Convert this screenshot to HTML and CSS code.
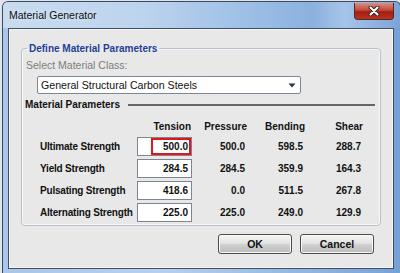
FILE: index.html
```html
<!DOCTYPE html>
<html lang="en">
<head>
    <meta charset="UTF-8">
    <title>Material Generator</title>
    <link rel="stylesheet" href="styles.css">
</head>
<body>
    <div class="window">
        <div class="titlebar">
            <span class="title">Material Generator</span>
            <span class="close">
                <svg width="12" height="10" viewBox="0 0 12 10">
                    <path d="M2.5 1.5 L9.5 8.5 M9.5 1.5 L2.5 8.5" stroke="#3a2a2a" stroke-width="4" stroke-linecap="round"/>
                    <path d="M2.5 1.5 L9.5 8.5 M9.5 1.5 L2.5 8.5" stroke="#ffffff" stroke-width="2" stroke-linecap="round"/>
                </svg>
            </span>
        </div>
        <div class="frame">
            <div class="client">
                <fieldset class="group">
                    <legend>Define Material Parameters</legend>
                    <div class="field-label">Select Material Class:</div>
                    <div class="combo">
                        <span>General Structural Carbon Steels</span>
                        <svg width="8" height="5" viewBox="0 0 8 5"><path d="M0.5 0.5 H7.5 L4 4.5 Z" fill="#333"/></svg>
                    </div>
                    <div class="section-head">
                        <span>Material Parameters</span>
                        <div class="rule"></div>
                    </div>
                    <div class="params">
                        <div></div>
                        <div class="head">Tension</div>
                        <div class="head">Pressure</div>
                        <div class="head">Bending</div>
                        <div class="head">Shear</div>

                        <div class="label">Ultimate Strength</div>
                        <div class="value"><div class="input"><span class="mark">500.0</span></div></div>
                        <div class="value num">500.0</div>
                        <div class="value num">598.5</div>
                        <div class="value num">288.7</div>

                        <div class="label">Yield Strength</div>
                        <div class="value"><div class="input">284.5</div></div>
                        <div class="value num">284.5</div>
                        <div class="value num">359.9</div>
                        <div class="value num">164.3</div>

                        <div class="label">Pulsating Strength</div>
                        <div class="value"><div class="input">418.6</div></div>
                        <div class="value num">0.0</div>
                        <div class="value num">511.5</div>
                        <div class="value num">267.8</div>

                        <div class="label">Alternating Strength</div>
                        <div class="value"><div class="input">225.0</div></div>
                        <div class="value num">225.0</div>
                        <div class="value num">249.0</div>
                        <div class="value num">129.9</div>
                    </div>
                </fieldset>
                <div class="buttons">
                    <button>OK</button>
                    <button>Cancel</button>
                </div>
            </div>
        </div>
    </div>
</body>
</html>
```

FILE: styles.css
```css
html, body {
    margin: 0;
    height: 100%;
    overflow: hidden;
}
body {
    background: #dde4ec;
    font-family: "Liberation Sans", Arial, sans-serif;
    color: #111;
}
.window {
    box-sizing: border-box;
    width: 399px;
    height: 273px;
    margin: 1px 0 0 2px;
    border: 1px solid #3b4a5c;
    border-bottom: none;
    border-radius: 6px 6px 0 0;
    background: linear-gradient(to right, #a9c6e8 0%, #b9d0ec 40%, #8fb2de 80%, #76a1d6 100%);
    overflow: hidden;
}
.titlebar {
    display: flex;
    align-items: flex-start;
    height: 26px;
    background: linear-gradient(to right, #c8dbf0 0%, #bdd4ee 35%, #9fc0e6 60%, #8cb1df 78%, #a6c4e8 86%, #7ba4d7 100%);
}
.title {
    margin: 7px 0 0 6px;
    font-size: 10.5px;
    line-height: 13px;
    color: #0c0c0c;
    text-shadow: 0 0 4px #e8f1fb;
}
.close {
    display: flex;
    align-items: center;
    justify-content: center;
    box-sizing: border-box;
    width: 40px;
    height: 17px;
    margin: 1px 6px 0 auto;
    border: 1px solid #5a2620;
    border-top: none;
    border-radius: 0 0 4px 4px;
    background: linear-gradient(to bottom, #d98e82 0%, #c24a38 45%, #a51e12 55%, #b83424 100%);
}
.frame {
    padding: 0 6px 0 5px;
}
.client {
    box-sizing: border-box;
    height: 241px;
    border: 1px solid #3f5064;
    box-shadow: inset 0 0 0 1px #f4f4f4;
    background: #e8e8e8;
    padding-top: 1px;
}
.group {
    width: 360px;
    box-sizing: border-box;
    margin: 12px 0 0 12px;
    padding: 0 0 2px 0;
    border: 1px solid #b6c1cc;
    border-radius: 4px;
    box-shadow: inset 0 0 0 1px #f7f7f7;
    min-inline-size: 0;
}
.group legend {
    margin-left: 5px;
    padding: 0 2px;
    font-size: 10px;
    font-weight: bold;
    line-height: 13px;
    color: #1f3d97;
}
.field-label {
    margin: 4px 0 0 4px;
    font-size: 10.5px;
    line-height: 12px;
    color: #7d7d7d;
}
.combo {
    display: flex;
    align-items: center;
    justify-content: space-between;
    box-sizing: border-box;
    width: 264px;
    height: 18px;
    margin: 5px 0 0 15px;
    padding: 0 4px 0 3px;
    border: 1px solid #7c8894;
    border-radius: 2px;
    background: #fff;
    font-size: 10.6px;
}
.section-head {
    display: flex;
    align-items: center;
    margin: 5px 5px 0 3px;
    font-size: 10px;
    font-weight: bold;
    line-height: 12px;
}
.rule {
    flex: 1;
    height: 2px;
    margin-left: 8px;
    background: #666;
}
.params {
    display: grid;
    grid-template-columns: 97px 55px 56px 58px 58px;
    grid-template-rows: 18px repeat(4, 22px);
    margin: 6px 0 0 18px;
    font-size: 10px;
    font-weight: bold;
}
.params > div {
    display: flex;
    align-items: center;
}
.label {
    letter-spacing: -0.2px;
}
.head {
    justify-content: flex-end;
    padding-right: 1px;
}
.num {
    justify-content: flex-end;
    padding-right: 3px;
}
.input {
    display: flex;
    align-items: center;
    justify-content: flex-end;
    box-sizing: border-box;
    width: 55px;
    height: 19px;
    padding-right: 3px;
    border: 1px solid #7d8690;
    background: #fff;
}
.input:has(.mark) {
    padding-right: 0;
}
.mark {
    box-sizing: border-box;
    width: 40px;
    height: 17px;
    line-height: 13px;
    padding-right: 1px;
    text-align: right;
    border: 2px solid #e3141b;
}
.buttons {
    display: flex;
    justify-content: flex-end;
    gap: 8px;
    margin: 8px 19px 0 0;
}
.buttons button {
    width: 74px;
    height: 20px;
    padding: 0;
    border: 1px solid #4b4b4b;
    border-radius: 3px;
    background: linear-gradient(to bottom, #f6f6f6 0%, #e4e4e4 45%, #cfcfcf 55%, #bdbdbd 100%);
    box-shadow: inset 0 0 0 1px #fafafa;
    font-family: "Liberation Sans", Arial, sans-serif;
    font-size: 10.5px;
    font-weight: bold;
    color: #111;
}
```
